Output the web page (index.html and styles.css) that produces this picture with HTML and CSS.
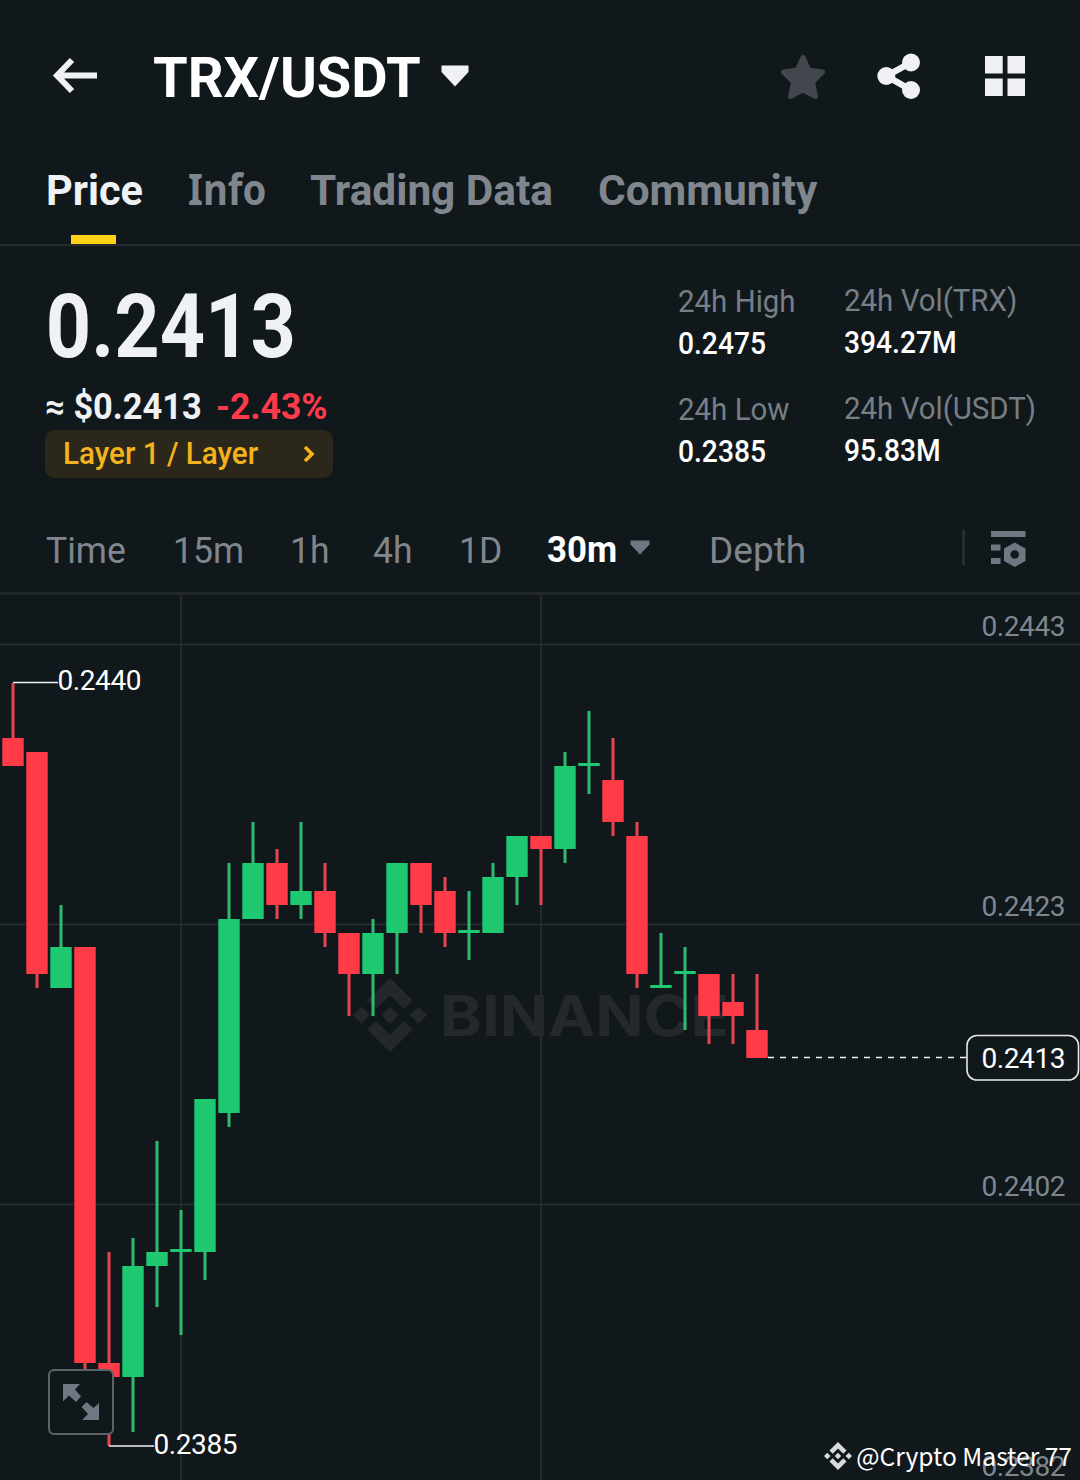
FILE: index.html
```
<!DOCTYPE html>
<html lang="en">
<head>
<meta charset="utf-8">
<title>TRX/USDT</title>
<link rel="stylesheet" href="styles.css">
</head>
<body>
<main class="app">
  <header class="header">
    <svg class="icon-back" viewBox="0 0 46 38"><path d="M20 3 5 18.500 20 34M5 18.500H45" fill="none" stroke="#f0f1f5" stroke-width="6"/></svg>
    <h1 class="pair">TRX/USDT</h1>
    <svg class="icon-caret" viewBox="0 0 28 22"><path d="M.5.5H27.500V7L14 21.500.5 7Z" fill="#f0f1f5"/></svg>
    <div class="actions">
      <svg class="icon-star" viewBox="0 0 46 46"><path d="M23 3.500 28.800 16 42.500 18 32.500 28 35.500 42.500 23 36 10.500 42.500 13.500 28 3.500 18 17.200 16Z" fill="#42474e" stroke="#42474e" stroke-width="5" stroke-linejoin="round"/></svg>
      <svg class="icon-share" viewBox="0 0 44 46"><path d="M34 9.500 9.500 23 34 37" fill="none" stroke="#f0f1f5" stroke-width="6.500"/><g fill="#f0f1f5"><circle cx="34" cy="9.500" r="9"/><circle cx="9.300" cy="23" r="9"/><circle cx="34" cy="37" r="9"/></g></svg>
      <svg class="icon-grid" viewBox="0 0 40 40"><path d="M0 0H17.700V17.500H0ZM22.500 0H40V17.500H22.500ZM0 22.500H17.700V40H0ZM22.500 22.500H40V40H22.500Z" fill="#f0f1f5"/></svg>
    </div>
  </header>

  <nav class="tabs">
    <a class="tab tab-active"><span class="label label-price">Price</span></a>
    <a class="tab"><span class="label label-info">Info</span></a>
    <a class="tab"><span class="label">Trading Data</span></a>
    <a class="tab"><span class="label">Community</span></a>
  </nav>

  <section class="quote">
    <div class="summary">
      <div class="last-price">0.2413</div>
      <div class="fiat"><span class="fiat-value">≈ $0.2413</span><span class="change">-2.43%</span></div>
      <a class="tag"><span class="tag-text">Layer 1 / Layer</span>
        <svg class="icon-chevron" viewBox="0 0 12 18"><path d="M2 2 9 9 2 16" fill="none" stroke="#f4b21c" stroke-width="3.600"/></svg></a>
    </div>
    <dl class="stats stats-price">
      <dt>24h High</dt><dd>0.2475</dd>
      <dt>24h Low</dt><dd>0.2385</dd>
    </dl>
    <dl class="stats stats-volume">
      <dt>24h Vol(TRX)</dt><dd>394.27M</dd>
      <dt>24h Vol(USDT)</dt><dd>95.83M</dd>
    </dl>
  </section>

  <nav class="intervals">
    <span class="interval">Time</span>
    <span class="interval">15m</span>
    <span class="interval">1h</span>
    <span class="interval">4h</span>
    <span class="interval">1D</span>
    <span class="interval interval-active">30m</span>
    <svg class="icon-caret-small" viewBox="0 0 20 15"><path d="M.5.5H19.500V4.500L10 14.500.5 4.500Z" fill="#707682"/></svg>
    <span class="interval interval-depth">Depth</span>
    <span class="divider"></span>
    <svg class="icon-settings" viewBox="0 0 36 37"><path d="M1 1H35.500V7H1ZM1 14.500H10.500V20.500H1ZM1 28H10.500V34H1ZM24.700 12.500 35.500 18.500V31L24.700 37 14 31V18.500ZM24.700 20.200A4.300 4.300 0 1 0 24.700 28.800 4.300 4.300 0 1 0 24.700 20.200Z" fill="#707682" fill-rule="evenodd"/></svg>
  </nav>

  <section class="chart">
    <svg class="plot" viewBox="0 593 1080 887">
      <g class="grid-lines">
        <path d="M0 644.500H1080M0 924.500H1080M0 1204.500H1080M181 594V1480M541 594V1480"/>
      </g>
      <g class="watermark">
        <path d="M390 978 412.500 1000.500 404 1009 390 995 376 1009 367.500 1000.500ZM390 1052 412.500 1029.500 404 1021 390 1035 376 1021 367.500 1029.500ZM361.500 1006.500 370 1015 361.500 1023.500 353 1015ZM418.500 1006.500 427 1015 418.500 1023.500 410 1015ZM390 1006.500 398.500 1015 390 1023.500 381.500 1015Z"/>
        <text x="440" y="1035.500" textLength="289" lengthAdjust="spacingAndGlyphs">BINANCE</text>
      </g>
      <g id="candles"></g>
      <path class="callout" d="M13 682.500H58M109 1446H154"/>
      <path class="last-line" d="M768 1057.500H966"/>
      <rect class="last-box" x="967" y="1035.500" width="111.500" height="44.500" rx="10"/>
      <g class="price-label">
        <text class="bright" x="57.500" y="690" textLength="84">0.2440</text>
        <text class="bright" x="153.500" y="1454" textLength="84">0.2385</text>
        <text class="bright" x="981.500" y="1068" textLength="84">0.2413</text>
        <text x="981.500" y="636" textLength="84">0.2443</text>
        <text x="981.500" y="916" textLength="84">0.2423</text>
        <text x="981.500" y="1196" textLength="84">0.2402</text>
        <text x="981.500" y="1476" textLength="84">0.2382</text>
      </g>
    </svg>
    <button class="expand" aria-label="Expand chart">
      <svg class="icon-expand" viewBox="0 0 36 36"><path d="M0 0H17L12 5.500 18 12.500 13 18 6 11.500 0 17.500ZM36 36V19L30.500 24 23.500 18 18.500 23 25 30 19 36Z" fill="#707682"/></svg>
    </button>
    <div class="credit">
      <svg class="icon-credit" viewBox="353 978 74 74"><path d="M390 978 412.500 1000.500 404 1009 390 995 376 1009 367.500 1000.500ZM390 1052 412.500 1029.500 404 1021 390 1035 376 1021 367.500 1029.500ZM361.500 1006.500 370 1015 361.500 1023.500 353 1015ZM418.500 1006.500 427 1015 418.500 1023.500 410 1015ZM390 1006.500 398.500 1015 390 1023.500 381.500 1015Z" fill="#d9dadc"/></svg>
      <span class="credit-name">@Crypto Master 77</span>
    </div>
  </section>
</main>
<script src="chart.js"></script>
</body>
</html>
```

FILE: styles.css
```
* { box-sizing: border-box; }

body {
  margin: 0;
  background: #11181b;
  color: #f0f1f5;
  font-family: Roboto, "Liberation Sans", sans-serif;
}

svg { display: block; flex: none; }

.app {
  width: 1080px;
  height: 1480px;
  display: flex;
  flex-direction: column;
  overflow: hidden;
}

.header {
  height: 155px;
  padding: 0 55px 2px 52px;
  display: flex;
  align-items: center;
}
.icon-back { width: 46px; height: 38px; }
.pair {
  width: 266px;
  margin: 4px 0 0 55px;
  font-size: 56px;
  line-height: 60px;
  font-weight: 700;
  color: #fff;
  white-space: nowrap;
}
.icon-caret { width: 28px; height: 22px; margin-left: 22px; }
.actions { margin-left: auto; display: flex; align-items: center; }
.icon-star { width: 46px; height: 46px; margin-top: 2px; }
.icon-share { width: 44px; height: 46px; margin-left: 51px; }
.icon-grid { width: 40px; height: 40px; margin-left: 64px; }

.tabs {
  height: 91px;
  padding-left: 45px;
  display: grid;
  grid-template-columns: 142px 123px 288px 240px;
  border-bottom: 2px solid #262c30;
}
.tab {
  display: flex;
  flex-direction: column;
  justify-content: space-between;
  align-items: flex-start;
  color: #80868d;
}
.label {
  font-size: 43px;
  line-height: 70px;
  font-weight: 700;
  white-space: nowrap;
  transform: scaleX(.985);
  transform-origin: left;
}
.label-price { margin-left: 1px; transform: scaleX(.965); }
.label-info {
  margin-left: 1px;
  font-family: "Noto Sans", sans-serif;
  line-height: 67px;
  transform: scaleX(.89);
}
.tab-active { color: #f0f1f5; }
.tab-active::after {
  content: "";
  width: 45px;
  height: 9px;
  margin-left: 26px;
  background: #fcd116;
}

.quote {
  height: 261px;
  padding: 31px 0 0 44px;
  display: grid;
  grid-template-columns: 634px 166px 1fr;
}
.last-price {
  height: 100px;
  padding-left: 2px;
  font-size: 89px;
  line-height: 100px;
  font-weight: 700;
  transform: scaleX(.89);
  transform-origin: left;
}
.fiat {
  height: 53px;
  margin-top: 4px;
  padding-left: 1px;
  display: grid;
  grid-template-columns: 171px auto;
  font-size: 36px;
  line-height: 53px;
  font-weight: 700;
  white-space: nowrap;
}
.fiat-value { transform: scaleX(.955); transform-origin: left; }
.change { color: #ff3b4b; transform: scaleX(.985); transform-origin: left; }
.tag {
  width: 288px;
  height: 48px;
  margin: -4px 0 0 1px;
  padding: 0 18px;
  display: flex;
  align-items: center;
  justify-content: space-between;
  border-radius: 10px;
  background: #2b281b;
  color: #f4b21c;
  font-size: 31px;
  font-weight: 500;
}
.tag-text { white-space: nowrap; transform: scaleX(.955); transform-origin: left; }
.icon-chevron { width: 12px; height: 18px; }

.stats {
  margin: 4px 0 0;
  white-space: nowrap;
  font-size: 31px;
  line-height: 42px;
}
.stats-volume { margin-top: 3px; }
.stats dt, .stats dd { margin: 0; transform-origin: left; }
.stats dt { color: #787e85; transform: scaleX(.95); }
.stats dd { margin-bottom: 24px; color: #fff; font-weight: 500; transform: scaleX(.91); }

.intervals {
  height: 86px;
  padding: 1px 0 0 46px;
  display: grid;
  grid-template-columns: 127px 117px 83px 86px 88px 83px 79px 255px 26px 36px;
  align-items: center;
  color: #80868d;
  font-size: 37px;
}
.interval { padding-top: 1px; white-space: nowrap; transform: scaleX(.96); transform-origin: left; }
.interval-active { padding: 0; color: #fff; font-weight: 700; transform: scaleX(.94); }
.interval-depth { transform: none; }
.icon-caret-small { width: 20px; height: 15px; margin-top: -5px; }
.divider { width: 3px; height: 35px; margin: -5px 0 0 -2px; background: #282d32; }
.icon-settings { width: 36px; height: 37px; margin-top: -3px; }

.chart {
  position: relative;
  height: 888px;
  border-top: 3px solid #20262a;
}
.plot { width: 1080px; height: 887px; margin-top: -2px; }
.grid-lines { fill: none; stroke: #2a2f33; stroke-width: 1.5; }
.watermark { fill: #24282c; }
.watermark text { font: 700 56px Inter, sans-serif; }
.up { fill: #1fc971; }
.down { fill: #ff3b47; }
.wick.up { fill: #2fb973; }
.wick.down { fill: #e64450; }
.callout { fill: none; stroke: #f0f1f5; stroke-width: 1.6; }
.last-line { stroke: #f0f1f5; stroke-width: 1.6; stroke-dasharray: 6 6; }
.last-box { fill: #11181b; stroke: #e6e7ea; stroke-width: 1.6; }
.price-label { font-size: 28px; fill: #80868d; }
.price-label .bright { fill: #fff; }

.expand {
  position: absolute;
  left: 48px;
  top: 774px;
  width: 66px;
  height: 66px;
  padding: 0;
  display: grid;
  place-items: center;
  border: 2px solid #5d636b;
  border-radius: 6px;
  background: #11181b;
}
.icon-expand { width: 36px; height: 36px; }

.credit {
  position: absolute;
  right: 8px;
  bottom: 6px;
  height: 36px;
  display: flex;
  align-items: center;
  gap: 4px;
  color: #fff;
  font: 24.6px/36px "Noto Sans CJK SC", sans-serif;
  white-space: nowrap;
}
.credit-name { margin-top: -3px; }
.icon-credit { width: 28px; height: 28px; }
```

FILE: chart.js
```
// Each candle: direction, wick top, body top, body bottom, wick bottom.
const candles = [
  ['down', 683, 738, 766, 766], ['down', 752, 752, 974, 988],
  ['up', 905, 947, 988, 988], ['down', 947, 947, 1363, 1377],
  ['down', 1252, 1363, 1377, 1446], ['up', 1238, 1266, 1377, 1432],
  ['up', 1141, 1252, 1266, 1307], ['up', 1210, 1249, 1252, 1335],
  ['up', 1099, 1099, 1252, 1280], ['up', 863, 919, 1113, 1127],
  ['up', 822, 863, 919, 919], ['down', 849, 863, 905, 919],
  ['up', 822, 891, 905, 919], ['down', 863, 891, 933, 947],
  ['down', 933, 933, 974, 1016], ['up', 919, 933, 974, 1016],
  ['up', 863, 863, 933, 974], ['down', 863, 863, 905, 933],
  ['down', 877, 891, 933, 947], ['up', 891, 930, 933, 960],
  ['up', 863, 877, 933, 933], ['up', 836, 836, 877, 905],
  ['down', 836, 836, 849, 905], ['up', 752, 766, 849, 863],
  ['up', 711, 763, 766, 794], ['down', 738, 780, 822, 836],
  ['down', 822, 836, 974, 988], ['up', 933, 985, 988, 988],
  ['up', 947, 971, 974, 1030], ['down', 974, 974, 1016, 1044],
  ['down', 974, 1002, 1016, 1044], ['down', 974, 1030, 1058, 1058],
];

const layer = document.getElementById('candles');

function bar(className, x, top, width, bottom) {
  const rect = document.createElementNS('http://www.w3.org/2000/svg', 'rect');
  rect.setAttribute('class', className);
  rect.setAttribute('x', x);
  rect.setAttribute('y', top);
  rect.setAttribute('width', width);
  rect.setAttribute('height', bottom - top);
  layer.append(rect);
}

candles.forEach(([direction, high, top, bottom, low], i) => {
  const center = 13 + i * 24;
  bar('wick ' + direction, center - 1.5, high, 3, low);
  bar(direction, center - 10.7, top, 21.4, bottom);
});
```
